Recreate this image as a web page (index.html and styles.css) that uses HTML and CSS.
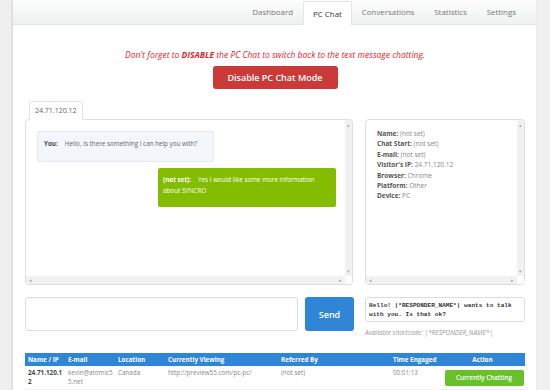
FILE: index.html
```html
<!DOCTYPE html>
<html lang="en">
<head>
  <meta charset="UTF-8">
  <meta name="viewport" content="width=device-width, initial-scale=1.0">
  <title>PC Chat</title>
  <link rel="stylesheet" href="styles.css">
</head>
<body>
  <div class="page">
    <header class="topbar">
      <nav class="tabs">
        <a href="#">Dashboard</a>
        <a href="#" class="active">PC Chat</a>
        <a href="#">Conversations</a>
        <a href="#">Statistics</a>
        <a href="#">Settings</a>
      </nav>
    </header>

    <main class="content">
      <p class="notice">Don't forget to <strong>DISABLE</strong> the PC Chat to switch back to the text message chatting.</p>
      <div class="notice-action">
        <button class="btn-disable">Disable PC Chat Mode</button>
      </div>

      <div class="chat-area">
        <div class="chat-col">
          <div class="chat-tabs">
            <span class="chat-tab">24.71.120.12</span>
          </div>
          <div class="scrollbox">
            <div class="messages">
              <div class="msg msg-me">
                <b>You:</b><span>Hello, Is there something I can help you with?</span>
              </div>
              <div class="msg msg-visitor">
                <p><b>(not set):</b><span>Yes I would like some more information</span></p>
                <p>about SYNCRO</p>
              </div>
            </div>
            <div class="vbar"><span>&#9652;</span><span>&#9662;</span></div>
            <div class="hbar"><span>&#9666;</span><span>&#9656;</span></div>
            <div class="corner"></div>
          </div>
        </div>

        <div class="scrollbox info-box">
          <ul class="visitor-info">
            <li><b>Name:</b> (not set)</li>
            <li><b>Chat Start:</b> (not set)</li>
            <li><b>E-mail:</b> (not set)</li>
            <li><b>Visitor's IP:</b> 24.71.120.12</li>
            <li><b>Browser:</b> Chrome</li>
            <li><b>Platform:</b> Other</li>
            <li><b>Device:</b> PC</li>
          </ul>
          <div class="vbar"><span>&#9652;</span><span>&#9662;</span></div>
          <div class="hbar"><span>&#9666;</span><span>&#9656;</span></div>
          <div class="corner"></div>
        </div>
      </div>

      <div class="compose">
        <div class="compose-main">
          <input type="text" class="msg-input">
          <button class="btn-send">Send</button>
        </div>
        <div class="compose-auto">
          <textarea class="auto-msg">Hello! |*RESPONDER_NAME*| wants to talk with you. Is that ok?</textarea>
          <p class="shortcode">Available shortcode: |*RESPONDER_NAME*|</p>
        </div>
      </div>

      <table class="visitors">
        <colgroup>
          <col style="width: 40px">
          <col style="width: 50px">
          <col style="width: 50px">
          <col style="width: 113px">
          <col style="width: 112px">
          <col style="width: 50px">
          <col>
        </colgroup>
        <thead>
          <tr>
            <th>Name / IP</th>
            <th>E-mail</th>
            <th>Location</th>
            <th>Currently Viewing</th>
            <th>Referred By</th>
            <th>Time Engaged</th>
            <th class="center">Action</th>
          </tr>
        </thead>
        <tbody>
          <tr>
            <td class="ip">24.71.120.12</td>
            <td>kevin@atomic55.net</td>
            <td>Canada</td>
            <td>http://preview55.com/pc-pc/</td>
            <td>(not set)</td>
            <td>00:01:13</td>
            <td class="center"><span class="btn-chatting">Currently Chatting</span></td>
          </tr>
        </tbody>
      </table>
    </main>
  </div>
</body>
</html>
```

FILE: styles.css
```css
* {
  box-sizing: border-box;
  margin: 0;
  padding: 0;
}

body {
  font-family: 'Open Sans', sans-serif;
  background-color: #efefef;
  color: #666;
  overflow: hidden;
  height: 390px;
}

.page {
  margin-left: 13px;
  width: 523px;
  min-height: 400px;
  background-color: #fff;
  box-shadow: -1px 0 2px rgba(0, 0, 0, 0.12);
}

/* top navigation */
.topbar {
  height: 25px;
  background: linear-gradient(#fdfdfd, #eef0f1);
  border-bottom: 1px solid #e2e4e6;
  display: flex;
  justify-content: flex-end;
  padding-right: 10px;
}

.tabs {
  display: flex;
  align-items: flex-end;
}

.tabs a {
  font-size: 7.9px;
  color: #777;
  text-decoration: none;
  padding: 0 10px;
  height: 24px;
  line-height: 24px;
}

.tabs a.active {
  background-color: #fff;
  color: #333;
  border: 1px solid #e4e6e8;
  border-bottom: none;
  border-radius: 2px 2px 0 0;
  margin-bottom: -1px;
  padding: 0 9px;
}

.content {
  padding: 24px 11px 0 12px;
}

.notice {
  text-align: center;
  color: #e5262b;
  font-style: italic;
  font-size: 8.5px;
  line-height: 11px;
}

.notice-action {
  display: flex;
  justify-content: center;
  margin-top: 6px;
}

.btn-disable {
  font-family: 'Open Sans', sans-serif;
  font-weight: 600;
  font-size: 9px;
  color: #fff;
  background-color: #cb3a39;
  border: none;
  border-radius: 3px;
  width: 125px;
  height: 23px;
}

/* chat + visitor info */
.chat-area {
  display: grid;
  grid-template-columns: 328px 160px;
  gap: 12px;
  align-items: end;
  margin-top: 12px;
}

.chat-tabs {
  display: flex;
  padding-left: 4px;
}

.chat-tab {
  font-size: 7px;
  color: #666;
  padding: 0 5px;
  height: 19px;
  line-height: 18px;
  border: 1px solid #e3e3e3;
  border-bottom: 1px solid #fff;
  border-radius: 3px 3px 0 0;
  background: #fff;
  margin-bottom: -1px;
  position: relative;
}

.scrollbox {
  height: 166px;
  border: 1px solid #dedede;
  border-radius: 4px;
  display: grid;
  grid-template-columns: 1fr 7px;
  grid-template-rows: 1fr 8px;
  overflow: hidden;
}

.vbar,
.hbar {
  background-color: #f1f1f1;
  color: #a8a8a8;
  font-size: 5px;
  display: flex;
  justify-content: space-between;
  align-items: center;
}

.vbar {
  flex-direction: column;
  padding: 2px 0;
}

.hbar {
  padding: 0 3px;
}

.corner {
  background-color: #fff;
}

.messages {
  padding: 11px 9px 0 11px;
  display: flex;
  flex-direction: column;
  gap: 6px;
}

.msg {
  font-size: 6.3px;
  line-height: 11px;
  padding: 6px 4px 12px 6px;
  border-radius: 2px;
}

.msg b {
  margin-right: 7px;
  font-weight: 700;
}

.msg-me {
  width: 177px;
  background-color: #f3f6fb;
  border: 1px solid #e4e9f1;
  color: #666;
  white-space: nowrap;
}

.msg-me b {
  color: #444;
}

.msg-visitor {
  align-self: flex-end;
  width: 178px;
  background-color: #84bd00;
  color: #fff;
  padding: 6px 10px 11px 5px;
  white-space: nowrap;
}

.visitor-info {
  list-style: none;
  padding: 9px 0 0 11px;
  font-size: 6.5px;
  line-height: 10.4px;
  color: #888;
}

.visitor-info b {
  color: #555;
  font-weight: 700;
}

/* compose row */
.compose {
  display: grid;
  grid-template-columns: 329px 160px;
  gap: 11px;
  margin-top: 12px;
}

.compose-main {
  display: flex;
  gap: 7px;
}

.msg-input {
  flex: 1;
  height: 34px;
  border: 1px solid #d9dee4;
  border-radius: 3px;
  box-shadow: inset 0 1px 1px rgba(0, 0, 0, 0.04);
}

.btn-send {
  width: 49px;
  height: 34px;
  background-color: #2f86d6;
  color: #fff;
  border: none;
  border-radius: 3px;
  font-family: 'Open Sans', sans-serif;
  font-weight: 600;
  font-size: 9px;
}

.auto-msg {
  display: block;
  width: 160px;
  height: 25px;
  resize: none;
  overflow: hidden;
  border: 1px solid #d9dee4;
  border-radius: 3px;
  padding: 3px 3px;
  font-family: 'Liberation Mono', monospace;
  font-weight: 700;
  font-size: 6.1px;
  line-height: 9px;
  color: #333;
}

.shortcode {
  font-size: 6.5px;
  font-style: italic;
  color: #999;
  margin-top: 6px;
}

/* visitors table */
.visitors {
  width: 500px;
  margin-top: 16px;
  border-collapse: collapse;
  table-layout: fixed;
  font-size: 6.3px;
}

.visitors th {
  background-color: #2f86d6;
  color: #fff;
  font-weight: 700;
  text-align: left;
  height: 13px;
  padding: 0 3px;
}

.visitors td {
  color: #888;
  padding: 3px 0 3px 3px;
  line-height: 8.5px;
  vertical-align: top;
  word-break: break-all;
  border-bottom: 1px solid #eee;
}

.visitors td.ip {
  color: #444;
  font-weight: 700;
}

.visitors .center {
  text-align: center;
}

.btn-chatting {
  display: inline-block;
  width: 79px;
  height: 16px;
  line-height: 16px;
  background-color: #68c02a;
  color: #fff;
  font-weight: 600;
  border-radius: 2px;
  margin-top: 1px;
}
```
